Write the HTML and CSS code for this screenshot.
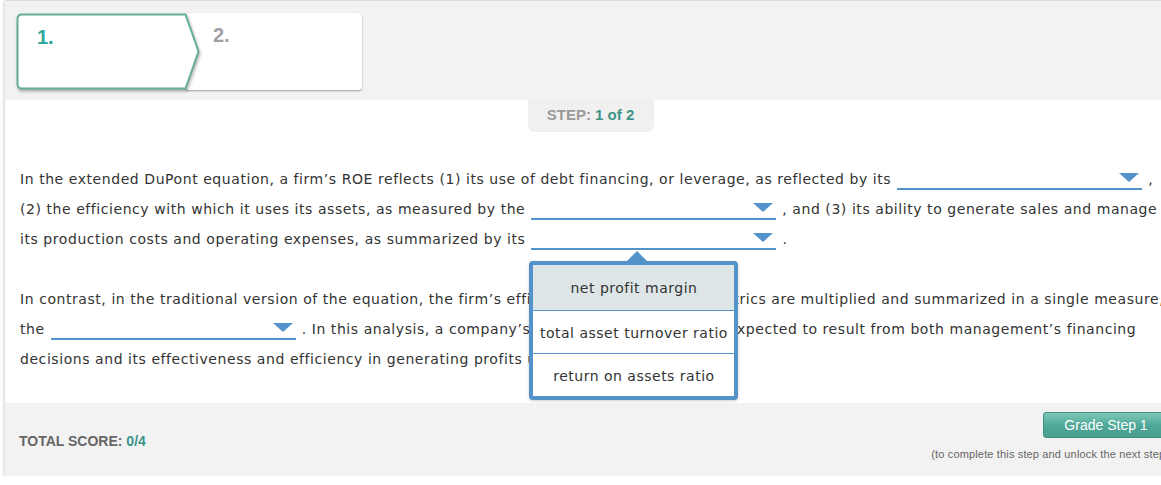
FILE: index.html
```html
<!DOCTYPE html>
<html lang="en">
<head>
    <meta charset="UTF-8">
    <meta name="viewport" content="width=device-width, initial-scale=1.0">
    <title>DuPont Analysis</title>
    <link rel="stylesheet" href="styles.css">
</head>
<body>
    <div class="card">
        <div class="steps">
            <div class="tab tab-active">
                <svg class="tab-shape" width="186" height="80" viewBox="0 0 186 80">
                    <path d="M6 1.5 H169.5 L182.5 38.5 L169.5 75.5 H6 Q1.5 75.5 1.5 71 V6 Q1.5 1.5 6 1.5 Z" fill="#fff" stroke="#66ae9c" stroke-width="2"/>
                </svg>
                <span class="tab-num">1.</span>
            </div>
            <div class="tab tab-next">
                <span class="tab-num">2.</span>
            </div>
        </div>

        <div class="content">
            <div class="step-badge">STEP: <span class="teal">1 of 2</span></div>

            <p class="question">
                In the extended DuPont equation, a firm’s ROE reflects (1) its use of debt financing, or leverage, as reflected by its
                <span class="dropdown"></span> ,<br>
                (2) the efficiency with which it uses its assets, as measured by the
                <span class="dropdown"></span> , and (3) its ability to generate sales and manage<br>
                its production costs and operating expenses, as summarized by its
                <span class="dropdown open">
                    <span class="menu">
                        <span class="menu-item selected">net profit margin</span>
                        <span class="menu-item">total asset turnover ratio</span>
                        <span class="menu-item">return on assets ratio</span>
                    </span>
                </span> .
            </p>

            <p class="question">
                In contrast, in the traditional version of the equation, the firm’s efficiency and profitability metrics are multiplied and summarized in a single measure,<br>
                the <span class="dropdown"></span> . In this analysis, a company’s return on equity (ROE) is expected to result from both management’s financing<br>
                decisions and its effectiveness and efficiency in generating profits using its assets.
            </p>
        </div>

        <div class="footer">
            <div class="score">TOTAL SCORE: <span class="teal">0/4</span></div>
            <div class="grade">
                <button class="grade-btn">Grade Step 1</button>
                <div class="grade-note">(to complete this step and unlock the next step)</div>
            </div>
        </div>
    </div>
</body>
</html>
```

FILE: styles.css
```css
body {
    margin: 0;
    padding: 0;
    background: #fff;
    overflow: hidden;
    font-family: "Liberation Sans", Arial, sans-serif;
}

.card {
    width: 1176px;
    margin-left: 5px;
    box-shadow: 0 1px 4px rgba(0, 0, 0, 0.3);
    background: #fff;
}

.teal {
    color: #3c9488;
}

/* step tabs */
.steps {
    display: flex;
    height: 100px;
    box-sizing: border-box;
    padding: 12px 0 0 12px;
    background: #f2f2f2;
    border-top: 1px solid #ddd;
}

.tab {
    position: relative;
    height: 77px;
}

.tab-active {
    width: 184px;
    z-index: 2;
}

.tab-shape {
    position: absolute;
    left: -1px;
    top: 0;
    filter: drop-shadow(1px 2px 1.5px rgba(0, 0, 0, 0.3));
}

.tab-next {
    width: 177px;
    margin-left: -16px;
    background: #fff;
    border-radius: 4px;
    box-shadow: 0 1px 2px rgba(0, 0, 0, 0.35);
}

.tab-num {
    position: relative;
    display: block;
    font-size: 20px;
    font-weight: bold;
    line-height: 20px;
}

.tab-active .tab-num {
    padding: 14px 0 0 20px;
    color: #2aa898;
}

.tab-next .tab-num {
    padding: 12px 0 0 28px;
    color: #a0a0a0;
}

/* question body */
.content {
    padding: 0 20px 29px 15px;
}

.step-badge {
    width: 126px;
    height: 32px;
    margin: 0 auto;
    background: #f0f0f0;
    border-radius: 0 0 6px 6px;
    font-size: 15px;
    font-weight: bold;
    line-height: 29px;
    text-align: center;
    color: #999;
}

.question {
    margin: 32px 0 0;
    font-family: "DejaVu Sans", Verdana, sans-serif;
    font-size: 14px;
    letter-spacing: 0.56px;
    line-height: 30px;
    color: #333;
    white-space: nowrap;
}

.question + .question {
    margin-top: 30px;
}

.dropdown {
    position: relative;
    display: inline-block;
    width: 245px;
    height: 20px;
    margin: 0 1px;
    vertical-align: -6px;
    border-bottom: 2px solid #5393c9;
}

.dropdown::after {
    content: "";
    position: absolute;
    right: 3px;
    top: 5px;
    border-left: 10px solid transparent;
    border-right: 10px solid transparent;
    border-top: 9px solid #5393c9;
}

/* open menu under the third blank */
.menu {
    position: absolute;
    left: -2px;
    top: 33px;
    z-index: 5;
    display: flex;
    flex-direction: column;
    width: 201px;
    border: 4px solid #5393c9;
    border-radius: 4px;
    background: #fff;
    box-shadow: 0 1px 3px rgba(0, 0, 0, 0.2);
    letter-spacing: 0.5px;
}

.menu::before {
    content: "";
    position: absolute;
    left: 94px;
    top: -14px;
    border-left: 10px solid transparent;
    border-right: 10px solid transparent;
    border-bottom: 10px solid #5393c9;
}

.menu-item {
    height: 42px;
    line-height: 45px;
    text-align: center;
    color: #333;
    border-top: 1px solid #5393c9;
}

.menu-item:first-child {
    border-top: none;
    height: 45px;
    line-height: 46px;
}

.menu-item.selected {
    background: #dde5e7;
}

/* footer */
.footer {
    display: flex;
    justify-content: space-between;
    align-items: flex-start;
    height: 73px;
    box-sizing: border-box;
    padding: 9px 12px 0 14px;
    background: #f2f2f2;
}

.score {
    margin-top: 21px;
    font-size: 14px;
    font-weight: bold;
    color: #666;
}

.grade {
    display: flex;
    flex-direction: column;
    align-items: flex-end;
}

.grade-btn {
    width: 126px;
    height: 26px;
    border: 1px solid #3f8f80;
    border-radius: 3px;
    background: linear-gradient(#7fcab8, #4fa898 50%, #4a9e8e);
    color: #fff;
    font-family: "Liberation Sans", Arial, sans-serif;
    font-size: 14px;
    cursor: pointer;
}

.grade-note {
    margin-top: 10px;
    font-size: 11px;
    letter-spacing: 0.15px;
    color: #666;
}
```
